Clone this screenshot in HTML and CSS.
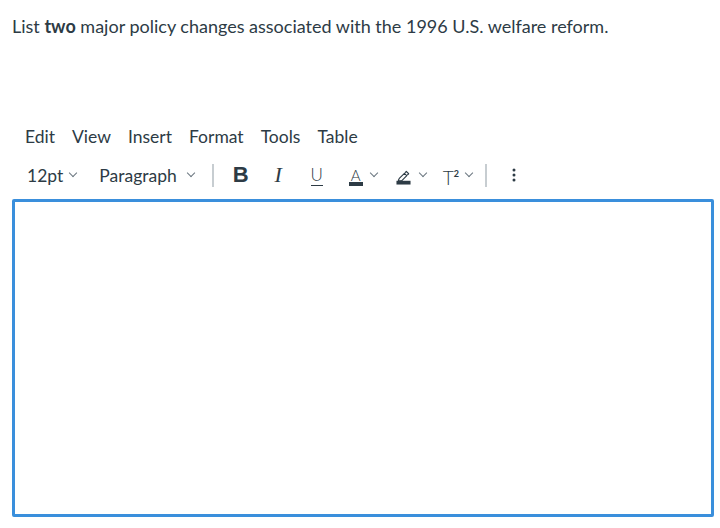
FILE: index.html
```html
<!DOCTYPE html>
<html lang="en">
<head>
    <meta charset="UTF-8">
    <title>Question</title>
    <link rel="stylesheet" href="styles.css">
</head>
<body>
    <div class="question">
        <p class="question-text">List <strong>two</strong> major policy changes associated with the 1996 U.S. welfare reform.</p>

        <div class="editor">
            <div class="menubar">
                <span class="menu-item">Edit</span>
                <span class="menu-item">View</span>
                <span class="menu-item">Insert</span>
                <span class="menu-item">Format</span>
                <span class="menu-item">Tools</span>
                <span class="menu-item">Table</span>
            </div>

            <div class="toolbar">
                <span class="tb-select size">12pt<span class="chev"></span></span>
                <span class="tb-select para">Paragraph<span class="chev"></span></span>
                <span class="tb-divider first"></span>
                <span class="tb-slot bold">B</span>
                <span class="tb-slot italic">I</span>
                <span class="tb-slot underline"><span class="u-letter">U</span></span>
                <span class="tb-slot color-a"><span class="a-letter">A</span></span>
                <span class="chev after-a"></span>
                <span class="tb-slot marker">
                    <svg width="16" height="15" viewBox="0 0 16 15">
                        <path d="M3.5 8.5 L9 3 L11.5 5.5 L6 11 L3 11 L2.5 10.5 Z" fill="none" stroke="#2d3b45" stroke-width="1.2" stroke-linejoin="round"/>
                        <path d="M9.5 2.5 L11 1 L13.5 3.5 L12 5" fill="none" stroke="#2d3b45" stroke-width="1.2" stroke-linejoin="round"/>
                        <rect x="0.5" y="11" width="15" height="4" fill="#2d3b45"/>
                    </svg>
                </span>
                <span class="chev after-marker"></span>
                <span class="tb-slot sup"><span class="sup-text">T<sup>2</sup></span></span>
                <span class="chev after-sup"></span>
                <span class="tb-divider second"></span>
                <span class="tb-slot more">
                    <svg width="4" height="14" viewBox="0 0 4 14">
                        <circle cx="2" cy="2" r="1.5" fill="#2d3b45"/>
                        <circle cx="2" cy="7" r="1.5" fill="#2d3b45"/>
                        <circle cx="2" cy="12" r="1.5" fill="#2d3b45"/>
                    </svg>
                </span>
            </div>

            <div class="editor-area"></div>
        </div>
    </div>
</body>
</html>
```

FILE: styles.css
```css
body {
    margin: 0;
    font-family: 'Lato', 'Liberation Sans', sans-serif;
    color: #2d3b45;
    background: #fff;
}

.question {
    padding: 0 6px 0 12px;
}

.question-text {
    font-size: 18px;
    margin: 0;
    padding-top: 14px;
    line-height: 24px;
}

.editor {
    margin-top: 89px;
}

.menubar {
    display: flex;
    gap: 17px;
    padding-left: 13px;
    font-size: 17.5px;
    line-height: 20px;
}

.toolbar {
    display: flex;
    align-items: center;
    height: 24px;
    margin-top: 16px;
    padding-left: 15px;
    font-size: 17.5px;
}

.tb-select {
    display: inline-flex;
    align-items: center;
}

.chev {
    display: inline-block;
    flex: none;
    width: 6px;
    height: 6px;
    box-sizing: border-box;
    border-right: 1px solid #6b7780;
    border-bottom: 1px solid #6b7780;
    transform: rotate(45deg);
    position: relative;
    top: -2px;
}

.size .chev {
    margin-left: 7px;
}

.size {
    margin-right: 23px;
}

.para .chev {
    margin-left: 11px;
}

.para {
    margin-right: 18px;
}

.tb-divider {
    flex: none;
    width: 2px;
    height: 23px;
    background: #c7cdd1;
}

.tb-slot {
    flex: none;
    display: inline-flex;
    justify-content: center;
    align-items: center;
    white-space: nowrap;
}

.bold {
    width: 14px;
    margin-left: 20px;
    font-family: 'Liberation Sans', sans-serif;
    font-weight: bold;
    font-size: 22px;
}

.italic {
    width: 11px;
    margin-left: 25px;
    font-family: 'Liberation Serif', serif;
    font-style: italic;
    font-size: 22px;
}

.underline {
    width: 12px;
    margin-left: 27px;
}

.u-letter {
    display: block;
    font-weight: 300;
    font-size: 17px;
    line-height: 16px;
    padding-bottom: 2px;
    border-bottom: 1px solid #2d3b45;
    margin-top: 2px;
}

.color-a {
    width: 14px;
    margin-left: 26px;
}

.a-letter {
    display: block;
    width: 14px;
    text-align: center;
    font-weight: 300;
    font-size: 15px;
    line-height: 13px;
    border-bottom: 4px solid #2d3b45;
    margin-top: 4px;
}

.after-a {
    margin-left: 8px;
}

.marker {
    width: 15px;
    margin-left: 19px;
}

.marker svg {
    margin-top: 4px;
}

.after-marker {
    margin-left: 9px;
}

.sup {
    width: 16px;
    margin-left: 17px;
    justify-content: flex-start;
}

.sup-text {
    font-weight: 300;
    font-size: 19px;
    margin-top: 4px;
}

.sup-text sup {
    font-size: 9px;
    font-weight: bold;
    vertical-align: 8px;
    margin-left: 0;
}

.after-sup {
    margin-left: 7px;
}

.tb-divider.second {
    margin-left: 13px;
}

.more {
    width: 4px;
    margin-left: 25px;
}

.editor-area {
    margin-top: 12px;
    height: 312px;
    border: 3px solid #3a8fdc;
    border-radius: 2px;
}
```
